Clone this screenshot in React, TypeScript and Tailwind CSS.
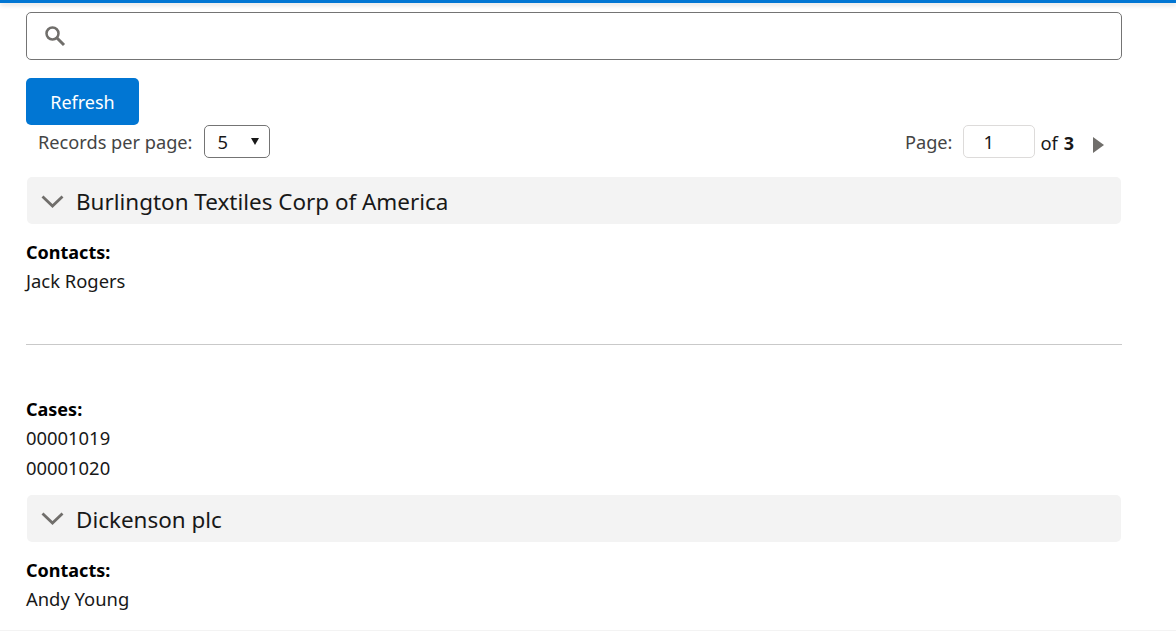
function SectionHeader({ title }: { title: string }) {
  return (
    <div className="h-[47px] mx-px bg-[#f3f3f3] rounded-[5px] flex items-center pl-[13px]">
      <svg width="25" height="24" viewBox="0 0 25 24" className="text-[#706e6b]" fill="none" stroke="currentColor" strokeWidth="2.8">
        <path d="M2.5 7.5 L12.5 17 L22.5 7.5" />
      </svg>
      <span className="ml-[11px] pt-[3px] text-[22.45px] text-[#181818]">{title}</span>
    </div>
  );
}

export default function App() {
  return (
    <div className="h-[631px] overflow-hidden bg-white border-b border-[#f3f3f3] text-[#181818] text-[18.4px] leading-[29.5px]" style={{ fontFamily: '"Noto Sans", sans-serif' }}>
      {/* Top accent */}
      <div className="h-[3px] bg-[#0176d3] shadow-[0_2px_5px_rgba(0,0,0,0.16)]" />

      <div className="w-[1096px] ml-[26px] pt-[9px]">
        {/* Search */}
        <div className="h-[48px] border border-[#747474] rounded-[5px] flex items-center pl-[17px]">
          <svg width="22" height="22" viewBox="0 0 22 22" className="text-[#706e6b] -mt-[1px]" fill="none" stroke="currentColor">
            <circle cx="8.5" cy="8.5" r="6" strokeWidth="2.5" />
            <path d="M13 13 L20 20" strokeWidth="3" />
          </svg>
        </div>

        <button className="mt-[18px] block w-[113px] h-[47px] bg-[#0176d3] rounded-[5px] text-white text-[18px] pt-[3px]">
          Refresh
        </button>

        {/* Pagination */}
        <div className="h-[33px] flex items-center justify-between">
          <div className="flex items-center pl-3">
            <span className="text-[#444444] mt-[3px] text-[18.2px]">Records per page:</span>
            <div className="ml-[12px] w-[66px] h-[33px] border border-[#747474] rounded-[5px] flex items-center justify-between pl-[12px] pr-[10px]">
              <span>5</span>
              <span className="w-0 h-0 border-x-[4px] border-x-transparent border-t-[7px] border-t-[#181818]" />
            </div>
          </div>
          <div className="flex items-center pr-[18px]">
            <span className="text-[#444444] mt-[3px] text-[18.2px]">Page:</span>
            <div className="ml-[11px] w-[72px] h-[33px] border border-[#dddbda] rounded-[5px] flex items-center pl-[19px]">1</div>
            <span className="ml-[5px] mt-[3px]">of <b className="ml-[1px] font-bold text-[18px]">3</b></span>
            <span className="ml-[19px] mt-[7px] w-0 h-0 border-y-[8px] border-y-transparent border-l-[11px] border-l-[#706e6b]" />
          </div>
        </div>

        <div className="mt-[19px]">
          <SectionHeader title="Burlington Textiles Corp of America" />
          <div className="pt-[16px]">
            <div className="font-bold text-black text-[18px] leading-[25.5px]">Contacts:</div>
            <div>Jack Rogers</div>
          </div>
          <div className="mt-[49px] border-t border-[#c9c9c9]" />
          <div className="pt-[52px]">
            <div className="font-bold text-black text-[18px] leading-[25.5px]">Cases:</div>
            <div>00001019</div>
            <div className="mt-[1px]">00001020</div>
          </div>
        </div>

        <div className="mt-[12px]">
          <SectionHeader title="Dickenson plc" />
          <div className="pt-[16px]">
            <div className="font-bold text-black text-[18px] leading-[25.5px]">Contacts:</div>
            <div className="mt-[1px]">Andy Young</div>
          </div>
        </div>
      </div>
    </div>
  );
}
